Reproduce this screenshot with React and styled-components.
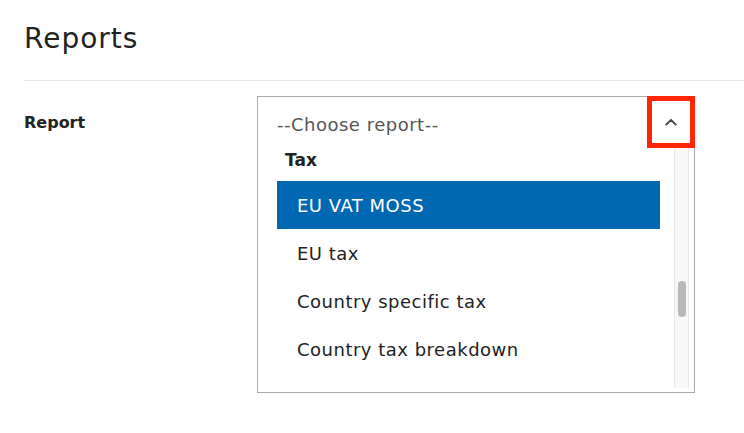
import React from "react";
import styled, { createGlobalStyle } from "styled-components";

const GlobalStyle = createGlobalStyle`
  html, body { margin: 0; padding: 0; background: #ffffff; }
  body {
    font-family: "DejaVu Sans", "Liberation Sans", sans-serif;
    color: #222222;
    letter-spacing: 0.5px;
  }
  * { box-sizing: border-box; }
`;

const Page = styled.div`
  width: 744px;
  height: 433px;
  padding-left: 24px;
  overflow: hidden;
`;

const Title = styled.h1`
  margin: 0;
  padding-top: 22px;
  font-size: 28px;
  line-height: 34px;
  font-weight: 400;
  letter-spacing: 1px;
  color: #222222;
`;

const Divider = styled.hr`
  margin: 24px 0 0 0;
  border: 0;
  border-top: 1px solid #e4e7ea;
  height: 0;
`;

const FormRow = styled.div`
  display: grid;
  grid-template-columns: 233px 438px;
  margin-top: 15px;
`;

const Label = styled.div`
  padding-top: 17px;
  font-size: 16px;
  line-height: 20px;
  font-weight: 700;
  letter-spacing: 0;
  color: #222222;
`;

const SelectBox = styled.div`
  width: 438px;
  height: 297px;
  border: 1px solid #a9a9a9;
  display: flex;
  flex-direction: column;
  background: #ffffff;
`;

const SelectHeader = styled.div`
  height: 51px;
  display: flex;
  justify-content: space-between;
  align-items: flex-start;
  flex: none;
`;

const Placeholder = styled.div`
  padding: 17px 0 0 19px;
  font-size: 18px;
  line-height: 22px;
  color: #555555;
`;

const ToggleButton = styled.div`
  width: 48px;
  height: 52px;
  margin: -1px -1px 0 0;
  border: 5px solid #fe2600;
  display: flex;
  align-items: center;
  justify-content: center;
  background: #ffffff;
`;

const ListArea = styled.div`
  flex: 1;
  display: flex;
  padding: 0 5px 4px 19px;
  min-height: 0;
`;

const List = styled.div`
  flex: 1;
  padding-right: 14px;
`;

const GroupLabel = styled.div`
  padding: 1px 0 10px 8px;
  font-size: 17px;
  line-height: 22px;
  font-weight: 700;
  letter-spacing: 0;
  color: #222222;
`;

const Option = styled.div`
  height: 48px;
  display: flex;
  align-items: center;
  padding-left: 20px;
  font-size: 18px;
  color: ${(p) => (p.$selected ? "#ffffff" : "#222222")};
  background: ${(p) => (p.$selected ? "#0068b3" : "transparent")};
`;

const ScrollTrack = styled.div`
  width: 15px;
  flex: none;
  background: #f8f8f8;
  border-left: 1px solid #e6e6e6;
  border-right: 1px solid #e6e6e6;
  display: flex;
  justify-content: center;
`;

const ScrollThumb = styled.div`
  width: 8px;
  height: 36px;
  margin-top: 133px;
  border-radius: 4px;
  background: #b9b9b9;
`;

const ChevronUp = () => (
  <svg width="12" height="8" viewBox="0 0 12 8" fill="none">
    <path d="M1.2 6.6 L6 2 L10.8 6.6" stroke="#444444" strokeWidth="1.9" strokeLinecap="round" strokeLinejoin="round" />
  </svg>
);

const options = [
  { label: "EU VAT MOSS", selected: true },
  { label: "EU tax" },
  { label: "Country specific tax" },
  { label: "Country tax breakdown" },
];

export default function App() {
  return (
    <>
      <GlobalStyle />
      <Page>
        <Title>Reports</Title>
        <Divider />
        <FormRow>
          <Label>Report</Label>
          <SelectBox>
            <SelectHeader>
              <Placeholder>--Choose report--</Placeholder>
              <ToggleButton>
                <ChevronUp />
              </ToggleButton>
            </SelectHeader>
            <ListArea>
              <List>
                <GroupLabel>Tax</GroupLabel>
                {options.map((o) => (
                  <Option key={o.label} $selected={o.selected}>
                    {o.label}
                  </Option>
                ))}
              </List>
              <ScrollTrack>
                <ScrollThumb />
              </ScrollTrack>
            </ListArea>
          </SelectBox>
        </FormRow>
      </Page>
    </>
  );
}
